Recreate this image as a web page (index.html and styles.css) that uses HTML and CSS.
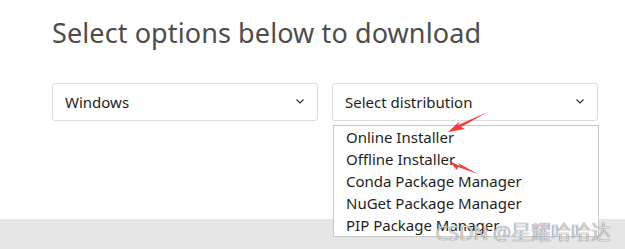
FILE: index.html
```html
<!DOCTYPE html>
<html lang="en">
<head>
    <meta charset="UTF-8">
    <title>Download</title>
    <link rel="stylesheet" href="styles.css">
</head>
<body>
    <div class="page">
        <h1 class="title">Select options below to download</h1>
        <div class="selects">
            <div class="select">
                <span>Windows</span>
                <svg class="chevron" width="8" height="5" viewBox="0 0 8 5"><path d="M0.5 0.5 L4 4 L7.5 0.5" fill="none" stroke="#333" stroke-width="1.2"/></svg>
            </div>
            <div class="select open">
                <span>Select distribution</span>
                <svg class="chevron" width="8" height="5" viewBox="0 0 8 5"><path d="M0.5 0.5 L4 4 L7.5 0.5" fill="none" stroke="#333" stroke-width="1.2"/></svg>
                <ul class="options">
                    <li>Online Installer</li>
                    <li>Offline Installer</li>
                    <li>Conda Package Manager</li>
                    <li>NuGet Package Manager</li>
                    <li>PIP Package Manager</li>
                </ul>
            </div>
        </div>
    </div>
    <div class="band"></div>

    <!-- red annotation arrows -->
    <svg class="marks" width="625" height="249" viewBox="0 0 625 249">
        <path d="M488 112 L458 125 L460 121 L448 132 L465 129 L461 127 Z" fill="#f23b3b"/>
        <path d="M478 174 L458 163 L460 166 L449 161 L457 170 L458 167 Z" fill="#f23b3b"/>
    </svg>
    <div class="watermark">CSDN @星耀哈哈达</div>
</body>
</html>
```

FILE: styles.css
```css
* {
    margin: 0;
    padding: 0;
    box-sizing: border-box;
}

body {
    font-family: 'Noto Sans', 'Noto Sans CJK SC', sans-serif;
    background: #fff;
    width: 625px;
    height: 249px;
    overflow: hidden;
    position: relative;
}

.page {
    height: 219px;
    padding: 14px 0 0 52px;
}

.title {
    font-size: 27px;
    font-weight: 400;
    color: #4d4d4d;
    line-height: 38px;
    letter-spacing: 0.1px;
}

.selects {
    display: flex;
    gap: 14px;
    margin-top: 31px;
}

.select {
    width: 266px;
    height: 38px;
    border: 1px solid #dcdcdc;
    border-radius: 3px;
    display: flex;
    align-items: center;
    justify-content: space-between;
    padding: 0 13px 0 12px;
    font-size: 15px;
    color: #1e1e1e;
    position: relative;
}

.chevron {
    margin-top: -2px;
}

.options {
    list-style: none;
    position: absolute;
    top: 41px;
    left: 0;
    width: 266px;
    height: 112px;
    background: #fff;
    border: 1px solid #c8c8c8;
    padding: 0 0 0 12px;
    z-index: 2;
}

.options li {
    line-height: 22px;
    font-size: 15px;
    color: #1e1e1e;
}

.band {
    height: 30px;
    background: #e6e6e6;
}

.marks {
    position: absolute;
    top: 0;
    left: 0;
    z-index: 3;
}

.watermark {
    position: absolute;
    right: 14px;
    bottom: 3px;
    font-size: 20px;
    font-weight: 300;
    color: rgba(240, 240, 240, 0.9);
    text-shadow: 0 0 1px #707070, 0 0 1px #707070;
    z-index: 4;
}
```
